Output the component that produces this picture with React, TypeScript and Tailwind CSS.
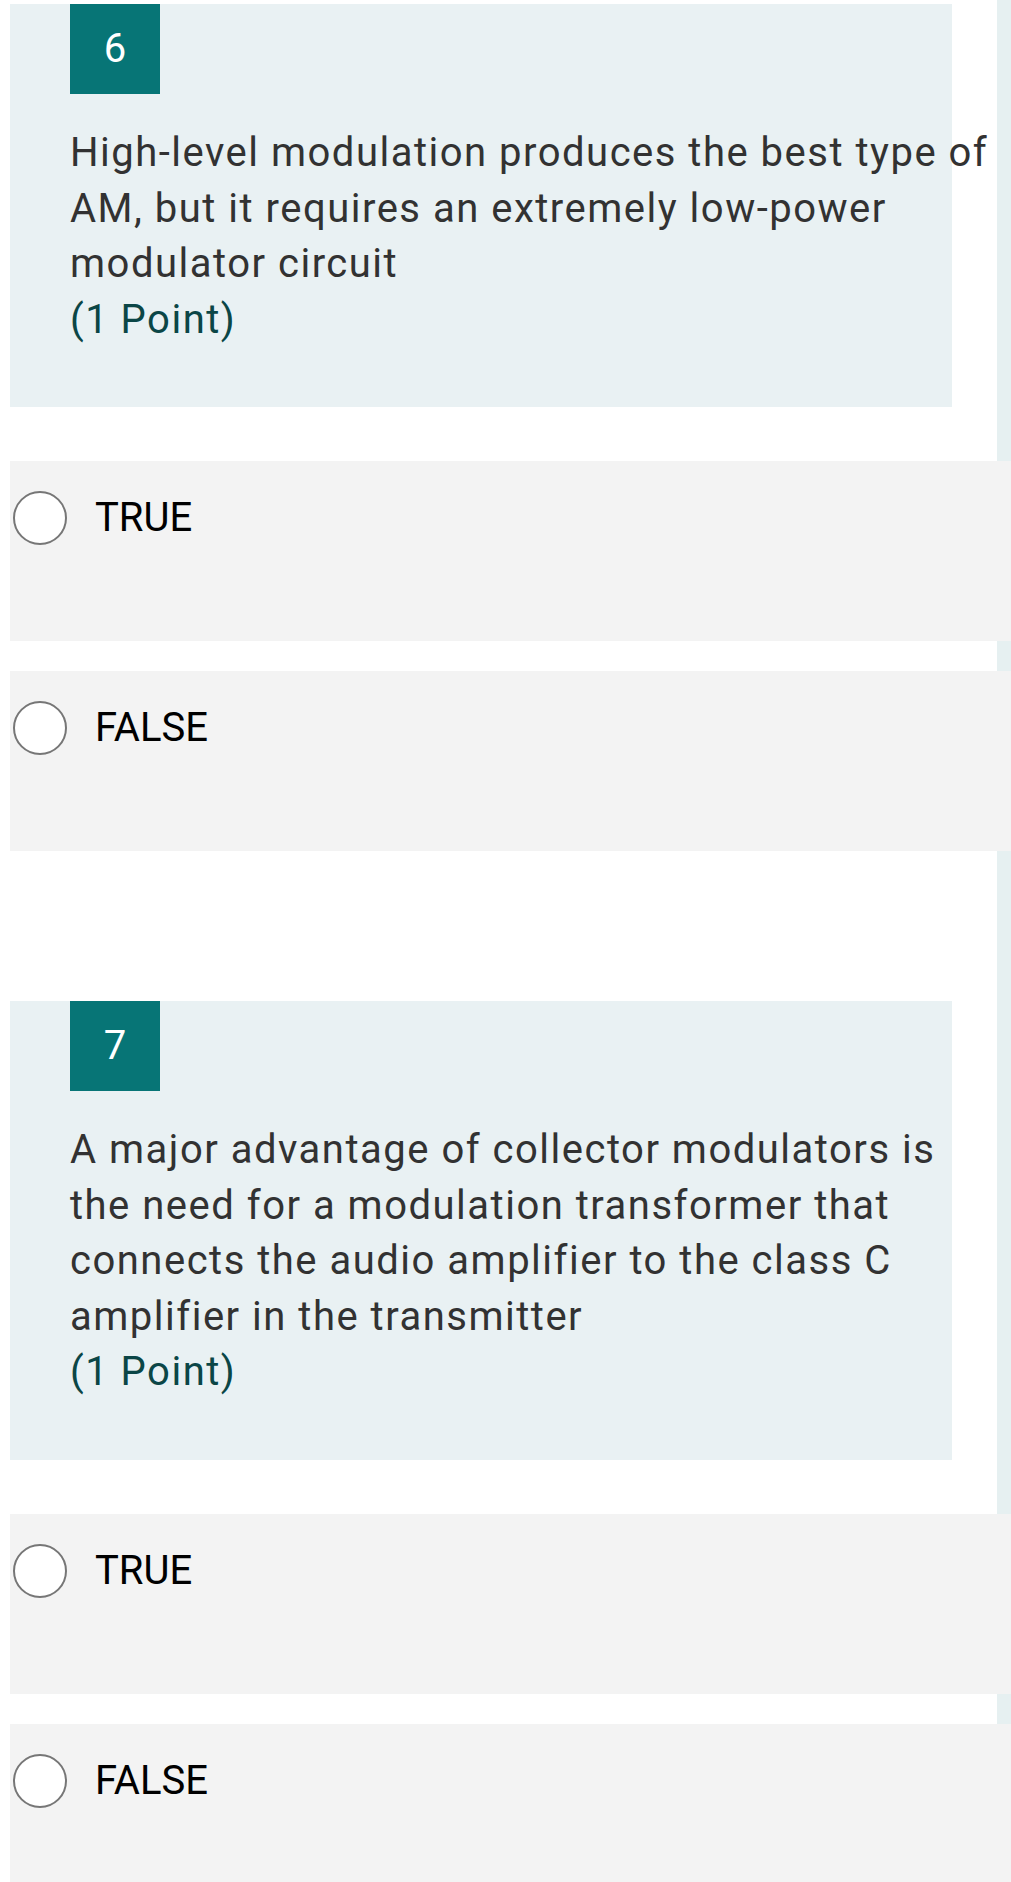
import React from 'react';

interface Question {
  number: number;
  text: string;
  points: number;
  options: string[];
}

const questions: Question[] = [
  {
    number: 6,
    text: 'High-level modulation produces the best type of AM, but it requires an extremely low-power modulator circuit',
    points: 1,
    options: ['TRUE', 'FALSE'],
  },
  {
    number: 7,
    text: 'A major advantage of collector modulators is the need for a modulation transformer that connects the audio amplifier to the class C amplifier in the transmitter',
    points: 1,
    options: ['TRUE', 'FALSE'],
  },
];

function OptionRow({ label }: { label: string }) {
  return (
    <label className="relative z-10 flex h-[180px] w-full cursor-pointer items-start bg-[#f3f3f3] pl-[3px] pt-[30px]">
      <span className="h-[54px] w-[54px] shrink-0 rounded-full border-[2.5px] border-[#767676] bg-white" />
      <span className="ml-[28px] text-[40px] leading-[54px] text-black">{label}</span>
    </label>
  );
}

function QuestionBlock({ q, first }: { q: Question; first?: boolean }) {
  return (
    <section className={first ? '' : 'mt-[150px]'}>
      <div className="w-[942px] bg-[#e9f1f3] pb-[60px] pl-[60px]">
        <div className="flex h-[90px] w-[90px] items-center justify-center bg-[#077576] text-[40px] text-white">
          {q.number}
        </div>
        <div className="mt-[31px] w-[926px] text-[40px] leading-[55.5px] tracking-[1.5px]">
          <p className="text-[#323232]">{q.text}</p>
          <p className="text-[#0b4646]">({q.points} Point)</p>
        </div>
      </div>
      <div className="mt-[54px] flex flex-col gap-[30px]">
        {q.options.map(opt => (
          <OptionRow key={opt} label={opt} />
        ))}
      </div>
    </section>
  );
}

export default function App() {
  return (
    <div
      className="relative h-[1882px] w-[1011px] overflow-hidden bg-white pl-[10px] pt-[4px]"
      style={{ fontFamily: 'Roboto, "Noto Sans", sans-serif' }}
    >
      {/* side rail behind the answer rows */}
      <div className="absolute inset-y-0 right-0 w-[14px] bg-[#e6f0f1]" />
      {questions.map((q, i) => (
        <QuestionBlock key={q.number} q={q} first={i === 0} />
      ))}
    </div>
  );
}
